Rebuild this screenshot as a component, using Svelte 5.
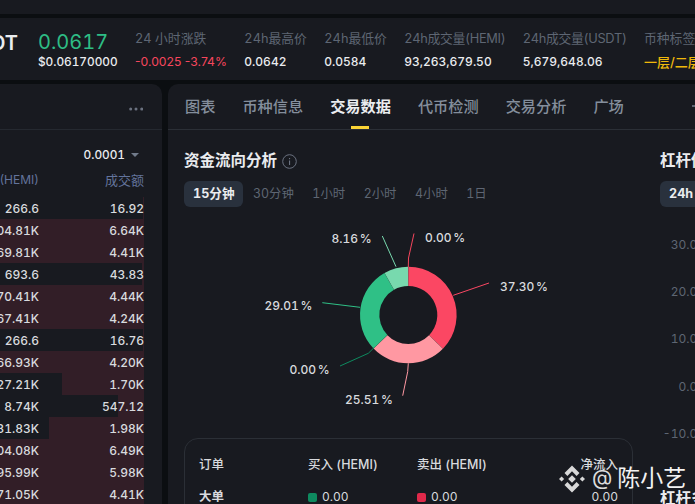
<script>
  const stats = [
    { label: '24 小时涨跌', value: '-0.0025 -3.74%', cls: 'down' },
    { label: '24h最高价', value: '0.0642', cls: '' },
    { label: '24h最低价', value: '0.0584', cls: '' },
    { label: '24h成交量(HEMI)', value: '93,263,679.50', cls: '', tight: true },
    { label: '24h成交量(USDT)', value: '5,679,648.06', cls: '', tight: true },
    { label: '币种标签', value: '一层/二层', cls: 'tag' }
  ];
  const tabs = ['图表', '币种信息', '交易数据', '代币检测', '交易分析', '广场'];
  const ranges = ['15分钟', '30分钟', '1小时', '2小时', '4小时', '1日'];
  const rows = [
    ['266.6', '16.92', 1],
    ['104.81K', '6.64K', 144],
    ['69.81K', '4.41K', 144],
    ['693.6', '43.83', 2],
    ['70.41K', '4.44K', 144],
    ['67.41K', '4.24K', 144],
    ['266.6', '16.76', 1],
    ['66.93K', '4.20K', 144],
    ['27.21K', '1.70K', 82],
    ['8.74K', '547.12', 26],
    ['31.83K', '1.98K', 95],
    ['104.08K', '6.49K', 144],
    ['95.99K', '5.98K', 144],
    ['71.05K', '4.41K', 144]
  ];
  const axis = ['30.00', '20.00', '10.00', '0.00', '-10.00'];

  const cx = 224.3, cy = 95, R = 48.3, r = 29;
  const slices = [
    { share: 37.30, color: '#fb4763' },
    { share: 25.51, color: '#ff98a2' },
    { share: 29.01, color: '#2fc086' },
    { share: 8.16, color: '#78d9ae' }
  ];
  function pt(rad, deg) {
    const a = (deg - 90) * Math.PI / 180;
    return (cx + rad * Math.cos(a)).toFixed(2) + ' ' + (cy + rad * Math.sin(a)).toFixed(2);
  }
  let acc = 0;
  const arcs = slices.map((s) => {
    const a0 = acc * 3.6;
    acc += s.share;
    const a1 = acc * 3.6 - 0.15;
    const large = a1 - a0 > 180 ? 1 : 0;
    return {
      color: s.color,
      d: `M${pt(R, a0)} A${R} ${R} 0 ${large} 1 ${pt(R, a1)} L${pt(r, a1)} A${r} ${r} 0 ${large} 0 ${pt(r, a0)} Z`
    };
  });
  const leaders = [
    { p: '224.3,47 224.5,38 230,13.5', c: '#f6465d' },
    { p: '212,46.7 198.3,16', c: '#78d9ae' },
    { p: '269.3,75.3 305,63', c: '#fb4763' },
    { p: '176,87.3 138.3,82.7', c: '#2fc086' },
    { p: '190,127.7 184.3,133.3 156,146', c: '#0e8a5f' },
    { p: '224.3,143.3 223.7,151.7 218.7,175.7', c: '#ff98a2' }
  ];
  const labels = [
    { t: '0.00 %', x: 241, y: 17 },
    { t: '8.16 %', x: 147.5, y: 18.5 },
    { t: '37.30 %', x: 316, y: 66 },
    { t: '29.01 %', x: 80.5, y: 85 },
    { t: '0.00 %', x: 105.5, y: 149.5 },
    { t: '25.51 %', x: 161, y: 179 }
  ];
</script>

<div class="page">
  <div class="strip"></div>
  <header class="ticker">
    <div class="symbol"><span>HEMIUSDT</span></div>
    <div class="price">
      <div class="last">0.0617</div>
      <div class="usd">$0.06170000</div>
    </div>
    <div class="stats">
      {#each stats as s}
        <div class="stat">
          <div class="stat-label" class:tight={s.tight}>{s.label}</div>
          <div class="stat-value {s.cls}">{s.value}</div>
        </div>
      {/each}
    </div>
  </header>

  <div class="panels">
    <aside class="book">
      <div class="book-top">
        <svg width="14" height="4" viewBox="0 0 14 4" fill="#6b7280">
          <circle cx="1.7" cy="2" r="1.5"/><circle cx="7" cy="2" r="1.5"/><circle cx="12.7" cy="2" r="1.5"/>
        </svg>
      </div>
      <div class="precision"><span>0.0001</span><i class="caret"></i></div>
      <div class="book-head"><span class="c1">(HEMI)</span><span class="c2 cjk">成交额</span></div>
      {#each rows as [qty, amount, depth]}
        <div class="row">
          <span class="bar" style="width:{depth}px"></span>
          <span class="c1">{qty}</span>
          <span class="c2">{amount}</span>
        </div>
      {/each}
    </aside>

    <main class="data">
      <nav class="tabs">
        {#each tabs as t, i}
          <span class="tab" class:active={i === 2}>{t}</span>
        {/each}
        <span class="tab-extra"></span>
      </nav>
      <div class="cols">
        <section class="flow">
          <h3>资金流向分析
            <svg class="info" width="15" height="15" viewBox="0 0 15 15" fill="none">
              <circle cx="7.5" cy="7.5" r="6.8" stroke="#6b7280" stroke-width="1"/>
              <rect x="7" y="6.5" width="1.1" height="4.5" fill="#6b7280"/>
              <rect x="7" y="4" width="1.1" height="1.2" fill="#6b7280"/>
            </svg>
          </h3>
          <div class="chips">
            {#each ranges as r, i}
              <span class="chip" class:on={i === 0}>{r}</span>
            {/each}
          </div>
          <svg class="donut" width="449" height="218" viewBox="0 0 449 218">
            {#each arcs as a}
              <path d={a.d} fill={a.color}/>
            {/each}
            {#each leaders as l}
              <polyline points={l.p} fill="none" stroke={l.c} stroke-width="1"/>
            {/each}
            {#each labels as l}
              <text x={l.x} y={l.y} dominant-baseline="central">{l.t}</text>
            {/each}
          </svg>
          <div class="orders">
            <div class="o-row head">
              <span>订单</span><span>买入 (HEMI)</span><span>卖出 (HEMI)</span><span class="net">净流入</span>
            </div>
            <div class="o-row">
              <b>大单</b>
              <span class="val"><i class="sq buy"></i>0.00</span>
              <span class="val"><i class="sq sell"></i>0.00</span>
              <span class="net val">0.00</span>
            </div>
          </div>
        </section>
        <section class="lever">
          <h3>杠杆借贷增长</h3>
          <div class="chips"><span class="chip on">24h</span></div>
          <div class="axis">
            {#each axis as a}<span>{a}</span>{/each}
          </div>
          <h3 class="second">杠杆多空比</h3>
        </section>
      </div>
    </main>
  </div>

  <div class="mark">
    <svg width="28" height="28" viewBox="0 0 28 28" fill="#d8d8d8">
      <path d="M14 0.5 L21.5 8 L18.6 10.9 L14 6.3 L9.4 10.9 L6.5 8 Z"/>
      <path d="M14 27.5 L21.5 20 L18.6 17.1 L14 21.7 L9.4 17.1 L6.5 20 Z"/>
      <path d="M14 10.2 L17.8 14 L14 17.8 L10.2 14 Z"/>
      <path d="M3.6 11.4 L6.2 14 L3.6 16.6 L1 14 Z"/>
      <path d="M24.4 11.4 L27 14 L24.4 16.6 L21.8 14 Z"/>
    </svg>
    <span class="at">@</span>
    <span class="who">陈小艺</span>
  </div>
</div>

<style>
  :global(body) {
    margin: 0;
    background: #0b0e11;
  }
  .page {
    position: relative;
    width: 695px;
    height: 504px;
    overflow: hidden;
    background: #0b0e11;
    color: #eaecef;
    font-family: Inter, "Noto Sans CJK SC", sans-serif;
    font-feature-settings: "tnum";
  }
  .strip {
    height: 14px;
    background: #181a20;
    margin-bottom: 4px;
  }
  .ticker {
    display: flex;
    height: 62px;
    background: #181a20;
    margin-bottom: 4px;
    white-space: nowrap;
  }
  .symbol {
    width: 18px;
    flex: none;
    margin-right: 20px;
    display: flex;
    justify-content: flex-end;
    overflow: hidden;
    font-size: 20px;
    font-weight: 600;
    line-height: 50px;
  }
  .price { width: 97px; flex: none; }
  .last {
    font-size: 20px;
    line-height: 24px;
    margin-top: 12px;
    color: #2ebd85;
  }
  .usd {
    font-size: 11.8px;
    line-height: 16px;
    font-weight: 500;
  }
  .stats { display: flex; gap: 17.4px; flex: none; }
  .stat { padding-top: 13px; flex: none; }
  .stat-label {
    font-size: 12.8px;
    line-height: 16px;
    color: #5e6673;
  }
  .stat-label.tight { letter-spacing: -0.3px; }
  .stat-value {
    font-size: 12px;
    line-height: 16px;
    margin-top: 7px;
    font-weight: 500;
  }
  .stat-value.down {
    color: #f6465d;
    font-weight: 400;
    font-size: 12.2px;
    font-feature-settings: normal;
  }
  .stat-value.tag { color: #f0b90b; font-size: 13px; }

  .panels {
    display: flex;
    gap: 6px;
    height: 420px;
  }
  .book {
    width: 162px;
    flex: none;
    background: #181a20;
    border-radius: 0 10px 0 0;
    overflow: hidden;
  }
  .book-top {
    height: 46px;
    border-bottom: 1px solid #252930;
    box-sizing: border-box;
    display: flex;
    align-items: center;
    justify-content: flex-end;
    padding-right: 19px;
    padding-top: 4px;
  }
  .precision {
    height: 49px;
    display: flex;
    align-items: center;
    justify-content: flex-end;
    padding-right: 23px;
    gap: 6px;
    font-size: 11.8px;
    font-weight: 500;
  }
  .caret {
    width: 0;
    height: 0;
    border-left: 4px solid transparent;
    border-right: 4px solid transparent;
    border-top: 4px solid #707a8a;
  }
  .book-head, .row {
    width: 144px;
    display: flex;
    font-size: 12px;
    font-weight: 500;
  }
  .book-head {
    height: 22px;
    margin-top: -10px;
    margin-bottom: 6px;
    line-height: 22px;
    color: #63749c;
    font-weight: 400;
  }
  .cjk { font-size: 13px; }
  .row {
    position: relative;
    height: 22px;
    line-height: 24px;
    color: #d8dade;
  }
  .bar {
    position: absolute;
    right: 0;
    top: 0;
    bottom: 0;
    background: #321e27;
  }
  .c1, .c2 { position: relative; text-align: right; white-space: nowrap; }
  .c1 { width: 39px; display: flex; justify-content: flex-end; flex: none; }
  .c2 { flex: 1; }

  .data {
    flex: 1;
    min-width: 0;
    background: #181a20;
    border-radius: 10px 0 0 0;
    overflow: hidden;
  }
  .tabs {
    height: 46px;
    box-sizing: border-box;
    border-bottom: 1px solid #2b2f36;
    padding-left: 17px;
    display: flex;
    gap: 27px;
    align-items: center;
    font-size: 15.2px;
    color: #848e9c;
    position: relative;
  }
  .tab { position: relative; line-height: 45px; font-weight: 500; }
  .tab.active { color: #eaecef; font-weight: 700; }
  .tab.active::after {
    content: '';
    position: absolute;
    left: 21px;
    width: 18px;
    bottom: 0;
    height: 3px;
    background: #fcd535;
  }
  .tab-extra {
    position: absolute;
    right: 0;
    top: 21px;
    width: 3px;
    height: 2px;
    background: #5e6673;
  }
  .cols {
    display: flex;
    padding: 21px 0 0 16px;
    gap: 27px;
  }
  .flow { width: 449px; flex: none; }
  .lever { flex: 1; min-width: 0; white-space: nowrap; }
  h3 {
    display: flex;
    align-items: center;
    gap: 5px;
    margin: 0;
    font-size: 15.5px;
    line-height: 20px;
    font-weight: 700;
    color: #eaecef;
    white-space: nowrap;
  }
  .chips {
    display: flex;
    gap: 0.5px;
    margin-top: 10px;
    font-size: 12.4px;
  }
  .chip {
    height: 26px;
    line-height: 26px;
    padding: 0 9px;
    border-radius: 6px;
    color: #5e6673;
    white-space: nowrap;
  }
  .chip.on {
    background: #29313d;
    color: #eaecef;
    font-weight: 700;
    font-size: 12.6px;
  }
  .donut { display: block; margin-top: 13px; }
  .donut text { fill: #d8dade; font-size: 12px; font-weight: 500; word-spacing: -1.5px; }
  .orders {
    height: 90px;
    box-sizing: border-box;
    border: 1px solid #2b2f36;
    border-radius: 14px;
    padding: 16px 14px 0;
  }
  .o-row {
    display: grid;
    grid-template-columns: 109px 109px 1fr 60px;
    font-size: 12.5px;
    line-height: 20px;
    margin-bottom: 12px;
    color: #d8dade;
  }
  .o-row b { font-weight: 700; }
  .o-row.head { font-weight: 500; }
  .net { text-align: right; }
  .val { display: flex; align-items: center; gap: 5px; font-size: 12px; }
  .net.val { justify-content: flex-end; }
  .sq { width: 9px; height: 9px; border-radius: 2px; }
  .buy { background: #0e8a5f; }
  .sell { background: #e0294a; }
  .axis {
    display: flex;
    flex-direction: column;
    gap: 31.2px;
    margin-top: 30px;
    width: 45px;
    text-align: right;
    font-size: 12px;
    line-height: 16px;
    color: #5e6673;
  }
  .second { margin-top: 47px; }
  .mark {
    position: absolute;
    left: 558px;
    top: 464px;
    display: flex;
    align-items: center;
    color: #f2f2f2;
    white-space: nowrap;
  }
  .at { font-size: 21px; margin-left: 6px; color: #dcdcdc; margin-top: -3px; }
  .who { font-size: 23px; margin-left: 5px; margin-top: -5px; }
</style>
